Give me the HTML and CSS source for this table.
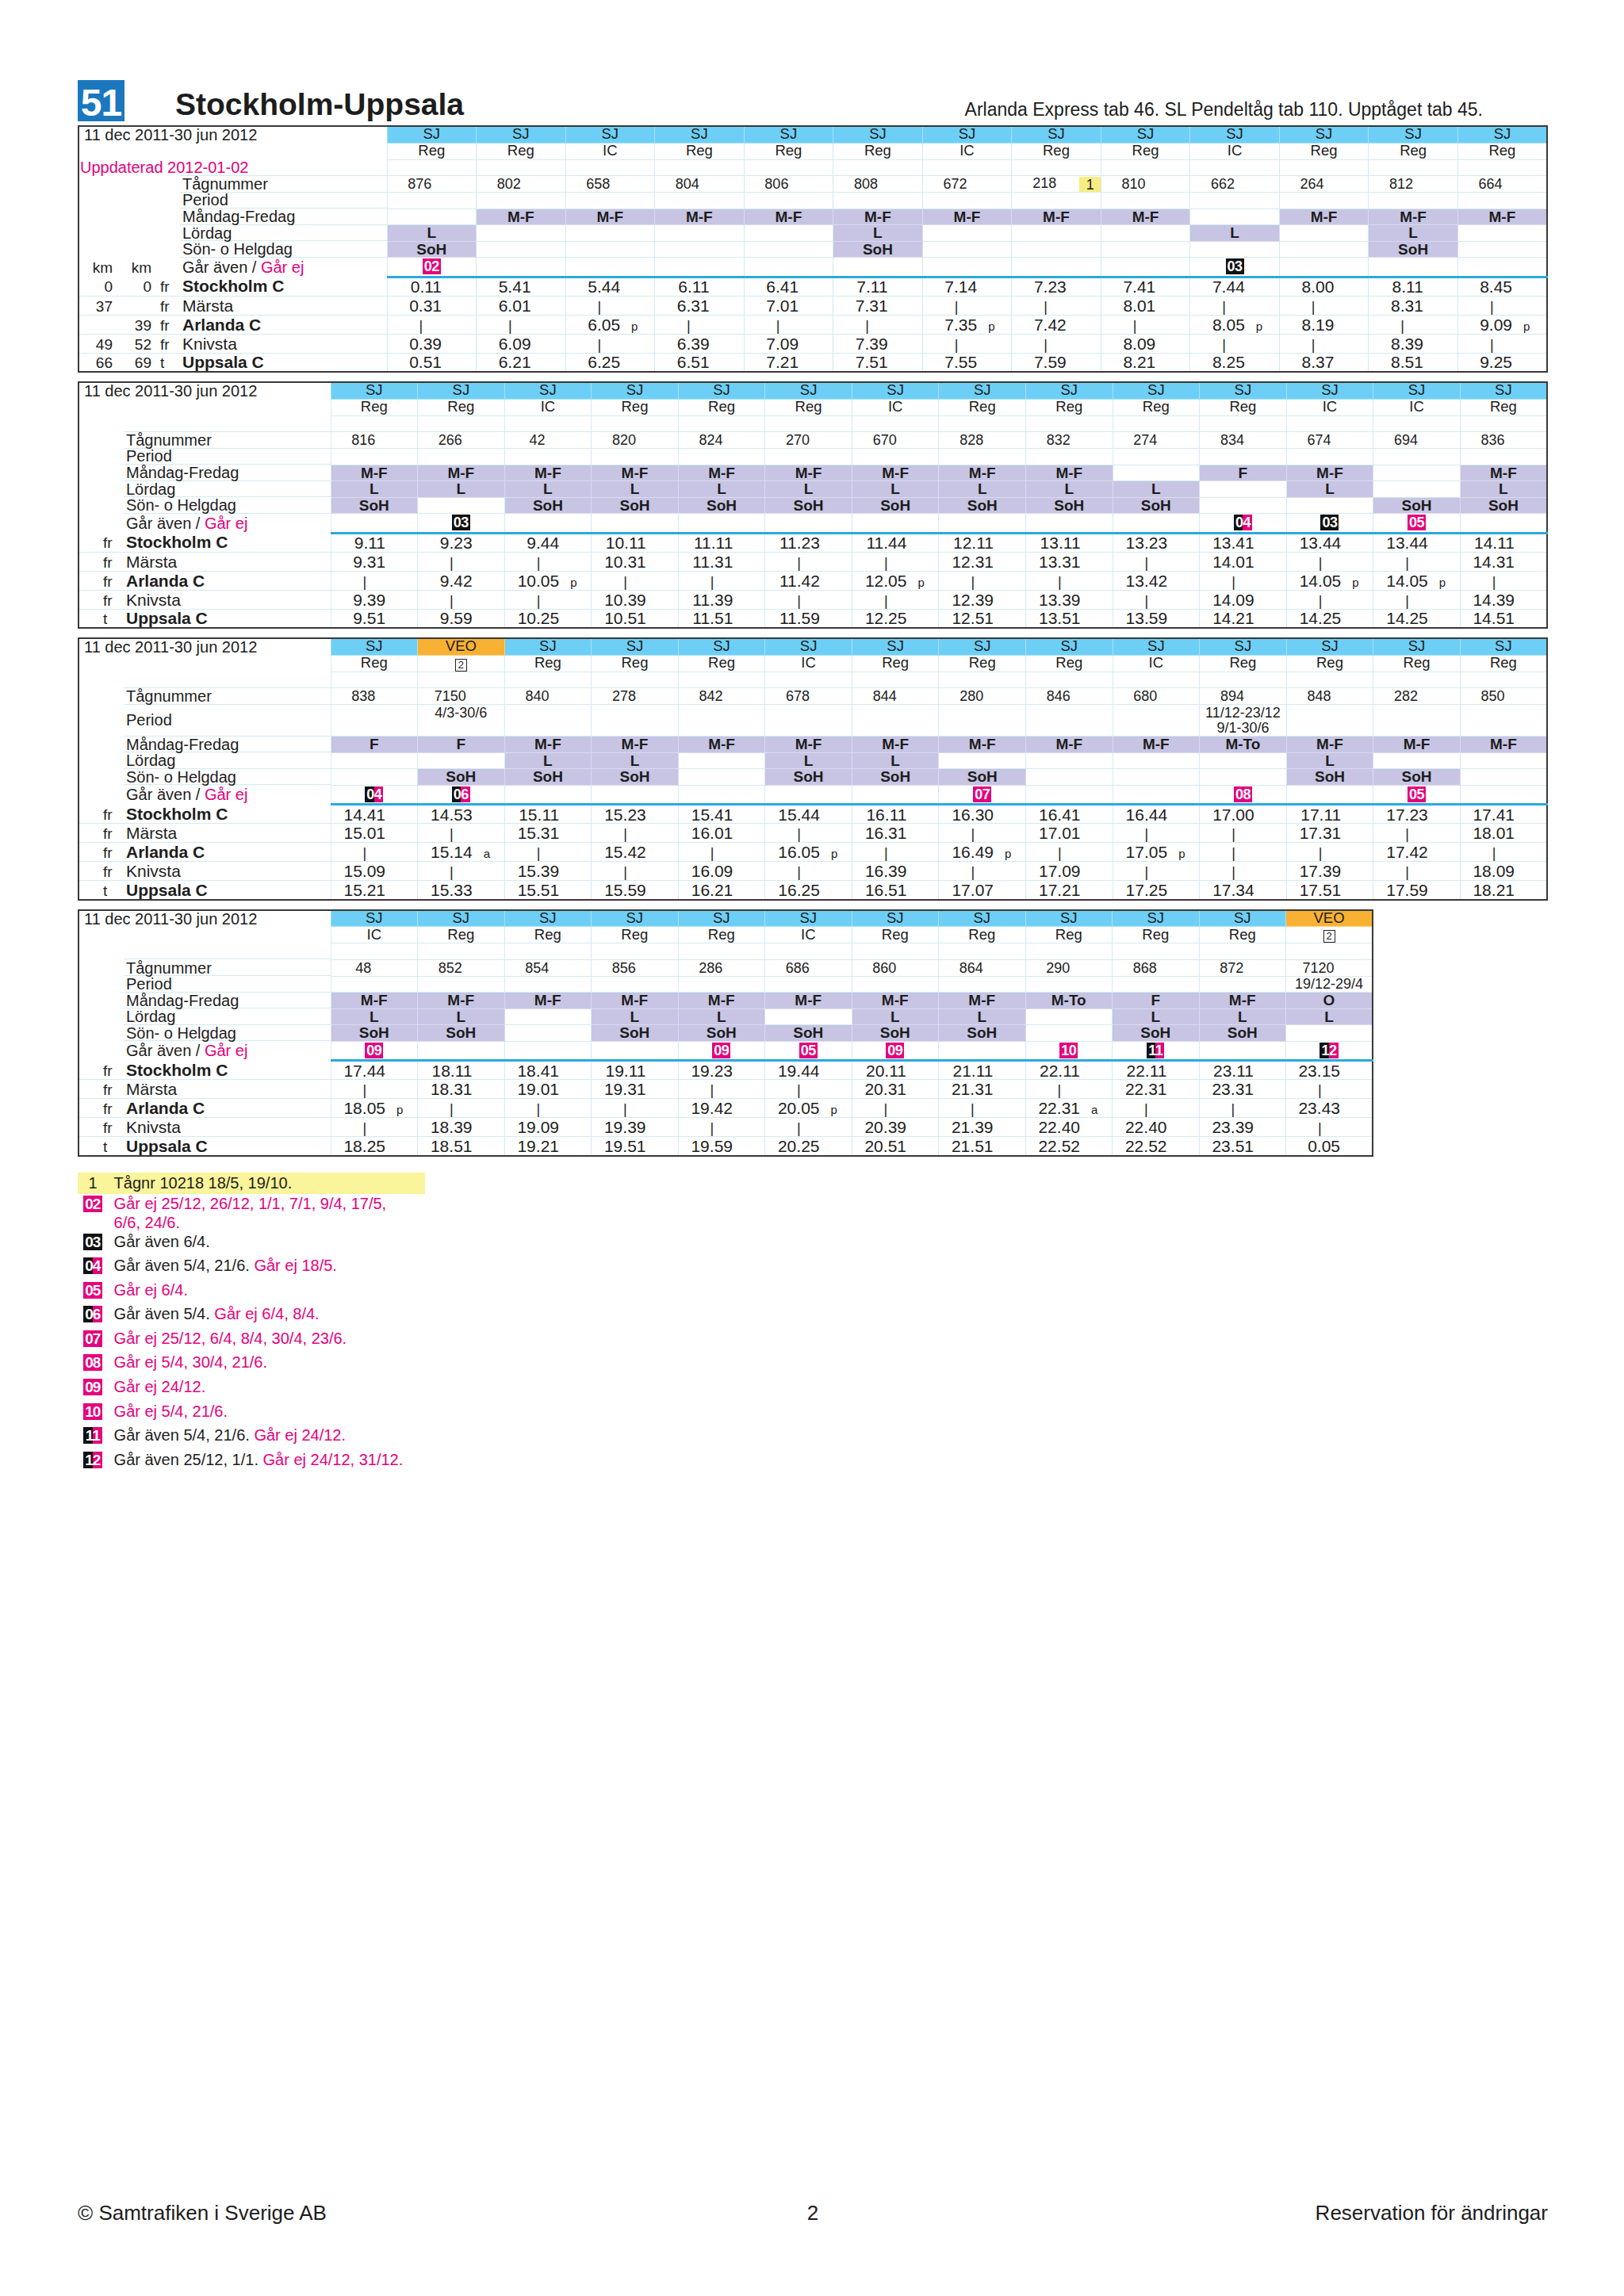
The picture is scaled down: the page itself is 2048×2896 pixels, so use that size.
FILE: index.html
```html
<!DOCTYPE html>
<html lang="sv">
<head>
<meta charset="utf-8">
<title>51 Stockholm-Uppsala</title>
<link rel="stylesheet" href="styles.css">
</head>
<body>
<div class="page">
<div class="hdr"><div class="no51">51</div><h1 class="title">Stockholm-Uppsala</h1><div class="xref">Arlanda Express tab 46. SL Pendeltåg tab 110. Upptåget tab 45.</div></div>

<table class="tt t13">
<colgroup><col class="cl"><col span="13"></colgroup>
<tr class="r-op"><td class="lab h0">11 dec 2011-30 jun 2012</td><td>SJ</td><td>SJ</td><td>SJ</td><td>SJ</td><td>SJ</td><td>SJ</td><td>SJ</td><td>SJ</td><td>SJ</td><td>SJ</td><td>SJ</td><td>SJ</td><td>SJ</td></tr>
<tr class="r-ty"><td class="lab"></td><td>Reg</td><td>Reg</td><td>IC</td><td>Reg</td><td>Reg</td><td>Reg</td><td>IC</td><td>Reg</td><td>Reg</td><td>IC</td><td>Reg</td><td>Reg</td><td>Reg</td></tr>
<tr class="r-bl"><td class="lab ln upd">Uppdaterad 2012-01-02</td><td></td><td></td><td></td><td></td><td></td><td></td><td></td><td></td><td></td><td></td><td></td><td></td><td></td></tr>
<tr class="r-nu"><td class="lab h ln">Tågnummer</td><td>876</td><td>802</td><td>658</td><td>804</td><td>806</td><td>808</td><td>672</td><td class="fnc"><span class="nv">218</span><span class="fk">1</span></td><td>810</td><td>662</td><td>264</td><td>812</td><td>664</td></tr>
<tr class="r-pe"><td class="lab h ln">Period</td><td></td><td></td><td></td><td></td><td></td><td></td><td></td><td></td><td></td><td></td><td></td><td></td><td></td></tr>
<tr class="r-mf"><td class="lab h ln">Måndag-Fredag</td><td></td><td class="on">M-F</td><td class="on">M-F</td><td class="on">M-F</td><td class="on">M-F</td><td class="on">M-F</td><td class="on">M-F</td><td class="on">M-F</td><td class="on">M-F</td><td></td><td class="on">M-F</td><td class="on">M-F</td><td class="on">M-F</td></tr>
<tr class="r-l"><td class="lab h ln">Lördag</td><td class="on">L</td><td></td><td></td><td></td><td></td><td class="on">L</td><td></td><td></td><td></td><td class="on">L</td><td></td><td class="on">L</td><td></td></tr>
<tr class="r-so"><td class="lab h ln">Sön- o Helgdag</td><td class="on">SoH</td><td></td><td></td><td></td><td></td><td class="on">SoH</td><td></td><td></td><td></td><td></td><td></td><td class="on">SoH</td><td></td></tr>
<tr class="r-no"><td class="lab"><span class="k1">km</span><span class="k2">km</span><span class="dir"></span>Går även / <span class="mg">Går ej</span></td><td><span class="b m">02</span></td><td></td><td></td><td></td><td></td><td></td><td></td><td></td><td></td><td><span class="b k">03</span></td><td></td><td></td><td></td></tr>
<tr class="r-ti"><td class="lab"><span class="k1">0</span><span class="k2">0</span><span class="dir">fr</span><b class="st">Stockholm C</b></td><td>0.11</td><td>5.41</td><td>5.44</td><td>6.11</td><td>6.41</td><td>7.11</td><td>7.14</td><td>7.23</td><td>7.41</td><td>7.44</td><td>8.00</td><td>8.11</td><td>8.45</td></tr>
<tr class="r-ti"><td class="lab"><span class="k1">37</span><span class="k2"></span><span class="dir">fr</span><span class="st">Märsta</span></td><td>0.31</td><td>6.01</td><td class="v">|</td><td>6.31</td><td>7.01</td><td>7.31</td><td class="v">|</td><td class="v">|</td><td>8.01</td><td class="v">|</td><td class="v">|</td><td>8.31</td><td class="v">|</td></tr>
<tr class="r-ti"><td class="lab"><span class="k1"></span><span class="k2">39</span><span class="dir">fr</span><b class="st">Arlanda C</b></td><td class="v">|</td><td class="v">|</td><td>6.05<span class="sx">p</span></td><td class="v">|</td><td class="v">|</td><td class="v">|</td><td>7.35<span class="sx">p</span></td><td>7.42</td><td class="v">|</td><td>8.05<span class="sx">p</span></td><td>8.19</td><td class="v">|</td><td>9.09<span class="sx">p</span></td></tr>
<tr class="r-ti"><td class="lab"><span class="k1">49</span><span class="k2">52</span><span class="dir">fr</span><span class="st">Knivsta</span></td><td>0.39</td><td>6.09</td><td class="v">|</td><td>6.39</td><td>7.09</td><td>7.39</td><td class="v">|</td><td class="v">|</td><td>8.09</td><td class="v">|</td><td class="v">|</td><td>8.39</td><td class="v">|</td></tr>
<tr class="r-ti"><td class="lab"><span class="k1">66</span><span class="k2">69</span><span class="dir">t</span><b class="st">Uppsala C</b></td><td>0.51</td><td>6.21</td><td>6.25</td><td>6.51</td><td>7.21</td><td>7.51</td><td>7.55</td><td>7.59</td><td>8.21</td><td>8.25</td><td>8.37</td><td>8.51</td><td>9.25</td></tr>
</table>

<table class="tt t14">
<colgroup><col class="cl"><col span="14"></colgroup>
<tr class="r-op"><td class="lab h0">11 dec 2011-30 jun 2012</td><td>SJ</td><td>SJ</td><td>SJ</td><td>SJ</td><td>SJ</td><td>SJ</td><td>SJ</td><td>SJ</td><td>SJ</td><td>SJ</td><td>SJ</td><td>SJ</td><td>SJ</td><td>SJ</td></tr>
<tr class="r-ty"><td class="lab"></td><td>Reg</td><td>Reg</td><td>IC</td><td>Reg</td><td>Reg</td><td>Reg</td><td>IC</td><td>Reg</td><td>Reg</td><td>Reg</td><td>Reg</td><td>IC</td><td>IC</td><td>Reg</td></tr>
<tr class="r-bl"><td class="lab ln"></td><td></td><td></td><td></td><td></td><td></td><td></td><td></td><td></td><td></td><td></td><td></td><td></td><td></td><td></td></tr>
<tr class="r-nu"><td class="lab h ln">Tågnummer</td><td>816</td><td>266</td><td>42</td><td>820</td><td>824</td><td>270</td><td>670</td><td>828</td><td>832</td><td>274</td><td>834</td><td>674</td><td>694</td><td>836</td></tr>
<tr class="r-pe"><td class="lab h ln">Period</td><td></td><td></td><td></td><td></td><td></td><td></td><td></td><td></td><td></td><td></td><td></td><td></td><td></td><td></td></tr>
<tr class="r-mf"><td class="lab h ln">Måndag-Fredag</td><td class="on">M-F</td><td class="on">M-F</td><td class="on">M-F</td><td class="on">M-F</td><td class="on">M-F</td><td class="on">M-F</td><td class="on">M-F</td><td class="on">M-F</td><td class="on">M-F</td><td></td><td class="on">F</td><td class="on">M-F</td><td></td><td class="on">M-F</td></tr>
<tr class="r-l"><td class="lab h ln">Lördag</td><td class="on">L</td><td class="on">L</td><td class="on">L</td><td class="on">L</td><td class="on">L</td><td class="on">L</td><td class="on">L</td><td class="on">L</td><td class="on">L</td><td class="on">L</td><td></td><td class="on">L</td><td></td><td class="on">L</td></tr>
<tr class="r-so"><td class="lab h ln">Sön- o Helgdag</td><td class="on">SoH</td><td></td><td class="on">SoH</td><td class="on">SoH</td><td class="on">SoH</td><td class="on">SoH</td><td class="on">SoH</td><td class="on">SoH</td><td class="on">SoH</td><td class="on">SoH</td><td></td><td></td><td class="on">SoH</td><td class="on">SoH</td></tr>
<tr class="r-no"><td class="lab h">Går även / <span class="mg">Går ej</span></td><td></td><td><span class="b k">03</span></td><td></td><td></td><td></td><td></td><td></td><td></td><td></td><td></td><td><span class="b s">04</span></td><td><span class="b k">03</span></td><td><span class="b m">05</span></td><td></td></tr>
<tr class="r-ti"><td class="lab"><span class="dir">fr</span><b class="st">Stockholm C</b></td><td>9.11</td><td>9.23</td><td>9.44</td><td>10.11</td><td>11.11</td><td>11.23</td><td>11.44</td><td>12.11</td><td>13.11</td><td>13.23</td><td>13.41</td><td>13.44</td><td>13.44</td><td>14.11</td></tr>
<tr class="r-ti"><td class="lab"><span class="dir">fr</span><span class="st">Märsta</span></td><td>9.31</td><td class="v">|</td><td class="v">|</td><td>10.31</td><td>11.31</td><td class="v">|</td><td class="v">|</td><td>12.31</td><td>13.31</td><td class="v">|</td><td>14.01</td><td class="v">|</td><td class="v">|</td><td>14.31</td></tr>
<tr class="r-ti"><td class="lab"><span class="dir">fr</span><b class="st">Arlanda C</b></td><td class="v">|</td><td>9.42</td><td>10.05<span class="sx">p</span></td><td class="v">|</td><td class="v">|</td><td>11.42</td><td>12.05<span class="sx">p</span></td><td class="v">|</td><td class="v">|</td><td>13.42</td><td class="v">|</td><td>14.05<span class="sx">p</span></td><td>14.05<span class="sx">p</span></td><td class="v">|</td></tr>
<tr class="r-ti"><td class="lab"><span class="dir">fr</span><span class="st">Knivsta</span></td><td>9.39</td><td class="v">|</td><td class="v">|</td><td>10.39</td><td>11.39</td><td class="v">|</td><td class="v">|</td><td>12.39</td><td>13.39</td><td class="v">|</td><td>14.09</td><td class="v">|</td><td class="v">|</td><td>14.39</td></tr>
<tr class="r-ti"><td class="lab"><span class="dir">t</span><b class="st">Uppsala C</b></td><td>9.51</td><td>9.59</td><td>10.25</td><td>10.51</td><td>11.51</td><td>11.59</td><td>12.25</td><td>12.51</td><td>13.51</td><td>13.59</td><td>14.21</td><td>14.25</td><td>14.25</td><td>14.51</td></tr>
</table>

<table class="tt t14">
<colgroup><col class="cl"><col span="14"></colgroup>
<tr class="r-op"><td class="lab h0">11 dec 2011-30 jun 2012</td><td>SJ</td><td class="veo">VEO</td><td>SJ</td><td>SJ</td><td>SJ</td><td>SJ</td><td>SJ</td><td>SJ</td><td>SJ</td><td>SJ</td><td>SJ</td><td>SJ</td><td>SJ</td><td>SJ</td></tr>
<tr class="r-ty"><td class="lab"></td><td>Reg</td><td><span class="box2">2</span></td><td>Reg</td><td>Reg</td><td>Reg</td><td>IC</td><td>Reg</td><td>Reg</td><td>Reg</td><td>IC</td><td>Reg</td><td>Reg</td><td>Reg</td><td>Reg</td></tr>
<tr class="r-bl"><td class="lab ln"></td><td></td><td></td><td></td><td></td><td></td><td></td><td></td><td></td><td></td><td></td><td></td><td></td><td></td><td></td></tr>
<tr class="r-nu"><td class="lab h ln">Tågnummer</td><td>838</td><td>7150</td><td>840</td><td>278</td><td>842</td><td>678</td><td>844</td><td>280</td><td>846</td><td>680</td><td>894</td><td>848</td><td>282</td><td>850</td></tr>
<tr class="r-pe tall"><td class="lab h ln">Period</td><td></td><td>4/3-30/6</td><td></td><td></td><td></td><td></td><td></td><td></td><td></td><td></td><td>11/12-23/12<br>9/1-30/6</td><td></td><td></td><td></td></tr>
<tr class="r-mf"><td class="lab h ln">Måndag-Fredag</td><td class="on">F</td><td class="on">F</td><td class="on">M-F</td><td class="on">M-F</td><td class="on">M-F</td><td class="on">M-F</td><td class="on">M-F</td><td class="on">M-F</td><td class="on">M-F</td><td class="on">M-F</td><td class="on">M-To</td><td class="on">M-F</td><td class="on">M-F</td><td class="on">M-F</td></tr>
<tr class="r-l"><td class="lab h ln">Lördag</td><td></td><td></td><td class="on">L</td><td class="on">L</td><td></td><td class="on">L</td><td class="on">L</td><td></td><td></td><td></td><td></td><td class="on">L</td><td></td><td></td></tr>
<tr class="r-so"><td class="lab h ln">Sön- o Helgdag</td><td></td><td class="on">SoH</td><td class="on">SoH</td><td class="on">SoH</td><td></td><td class="on">SoH</td><td class="on">SoH</td><td class="on">SoH</td><td></td><td></td><td></td><td class="on">SoH</td><td class="on">SoH</td><td></td></tr>
<tr class="r-no"><td class="lab h">Går även / <span class="mg">Går ej</span></td><td><span class="b s">04</span></td><td><span class="b s">06</span></td><td></td><td></td><td></td><td></td><td></td><td><span class="b m">07</span></td><td></td><td></td><td><span class="b m">08</span></td><td></td><td><span class="b m">05</span></td><td></td></tr>
<tr class="r-ti"><td class="lab"><span class="dir">fr</span><b class="st">Stockholm C</b></td><td>14.41</td><td>14.53</td><td>15.11</td><td>15.23</td><td>15.41</td><td>15.44</td><td>16.11</td><td>16.30</td><td>16.41</td><td>16.44</td><td>17.00</td><td>17.11</td><td>17.23</td><td>17.41</td></tr>
<tr class="r-ti"><td class="lab"><span class="dir">fr</span><span class="st">Märsta</span></td><td>15.01</td><td class="v">|</td><td>15.31</td><td class="v">|</td><td>16.01</td><td class="v">|</td><td>16.31</td><td class="v">|</td><td>17.01</td><td class="v">|</td><td class="v">|</td><td>17.31</td><td class="v">|</td><td>18.01</td></tr>
<tr class="r-ti"><td class="lab"><span class="dir">fr</span><b class="st">Arlanda C</b></td><td class="v">|</td><td>15.14<span class="sx">a</span></td><td class="v">|</td><td>15.42</td><td class="v">|</td><td>16.05<span class="sx">p</span></td><td class="v">|</td><td>16.49<span class="sx">p</span></td><td class="v">|</td><td>17.05<span class="sx">p</span></td><td class="v">|</td><td class="v">|</td><td>17.42</td><td class="v">|</td></tr>
<tr class="r-ti"><td class="lab"><span class="dir">fr</span><span class="st">Knivsta</span></td><td>15.09</td><td class="v">|</td><td>15.39</td><td class="v">|</td><td>16.09</td><td class="v">|</td><td>16.39</td><td class="v">|</td><td>17.09</td><td class="v">|</td><td class="v">|</td><td>17.39</td><td class="v">|</td><td>18.09</td></tr>
<tr class="r-ti"><td class="lab"><span class="dir">t</span><b class="st">Uppsala C</b></td><td>15.21</td><td>15.33</td><td>15.51</td><td>15.59</td><td>16.21</td><td>16.25</td><td>16.51</td><td>17.07</td><td>17.21</td><td>17.25</td><td>17.34</td><td>17.51</td><td>17.59</td><td>18.21</td></tr>
</table>

<table class="tt t14 w12">
<colgroup><col class="cl"><col span="12"></colgroup>
<tr class="r-op"><td class="lab h0">11 dec 2011-30 jun 2012</td><td>SJ</td><td>SJ</td><td>SJ</td><td>SJ</td><td>SJ</td><td>SJ</td><td>SJ</td><td>SJ</td><td>SJ</td><td>SJ</td><td>SJ</td><td class="veo">VEO</td></tr>
<tr class="r-ty"><td class="lab"></td><td>IC</td><td>Reg</td><td>Reg</td><td>Reg</td><td>Reg</td><td>IC</td><td>Reg</td><td>Reg</td><td>Reg</td><td>Reg</td><td>Reg</td><td><span class="box2">2</span></td></tr>
<tr class="r-bl"><td class="lab ln"></td><td></td><td></td><td></td><td></td><td></td><td></td><td></td><td></td><td></td><td></td><td></td><td></td></tr>
<tr class="r-nu"><td class="lab h ln">Tågnummer</td><td>48</td><td>852</td><td>854</td><td>856</td><td>286</td><td>686</td><td>860</td><td>864</td><td>290</td><td>868</td><td>872</td><td>7120</td></tr>
<tr class="r-pe"><td class="lab h ln">Period</td><td></td><td></td><td></td><td></td><td></td><td></td><td></td><td></td><td></td><td></td><td></td><td>19/12-29/4</td></tr>
<tr class="r-mf"><td class="lab h ln">Måndag-Fredag</td><td class="on">M-F</td><td class="on">M-F</td><td class="on">M-F</td><td class="on">M-F</td><td class="on">M-F</td><td class="on">M-F</td><td class="on">M-F</td><td class="on">M-F</td><td class="on">M-To</td><td class="on">F</td><td class="on">M-F</td><td class="on">O</td></tr>
<tr class="r-l"><td class="lab h ln">Lördag</td><td class="on">L</td><td class="on">L</td><td></td><td class="on">L</td><td class="on">L</td><td></td><td class="on">L</td><td class="on">L</td><td></td><td class="on">L</td><td class="on">L</td><td class="on">L</td></tr>
<tr class="r-so"><td class="lab h ln">Sön- o Helgdag</td><td class="on">SoH</td><td class="on">SoH</td><td></td><td class="on">SoH</td><td class="on">SoH</td><td class="on">SoH</td><td class="on">SoH</td><td class="on">SoH</td><td></td><td class="on">SoH</td><td class="on">SoH</td><td></td></tr>
<tr class="r-no"><td class="lab h">Går även / <span class="mg">Går ej</span></td><td><span class="b m">09</span></td><td></td><td></td><td></td><td><span class="b m">09</span></td><td><span class="b m">05</span></td><td><span class="b m">09</span></td><td></td><td><span class="b m">10</span></td><td><span class="b s">11</span></td><td></td><td><span class="b s">12</span></td></tr>
<tr class="r-ti"><td class="lab"><span class="dir">fr</span><b class="st">Stockholm C</b></td><td>17.44</td><td>18.11</td><td>18.41</td><td>19.11</td><td>19.23</td><td>19.44</td><td>20.11</td><td>21.11</td><td>22.11</td><td>22.11</td><td>23.11</td><td>23.15</td></tr>
<tr class="r-ti"><td class="lab"><span class="dir">fr</span><span class="st">Märsta</span></td><td class="v">|</td><td>18.31</td><td>19.01</td><td>19.31</td><td class="v">|</td><td class="v">|</td><td>20.31</td><td>21.31</td><td class="v">|</td><td>22.31</td><td>23.31</td><td class="v">|</td></tr>
<tr class="r-ti"><td class="lab"><span class="dir">fr</span><b class="st">Arlanda C</b></td><td>18.05<span class="sx">p</span></td><td class="v">|</td><td class="v">|</td><td class="v">|</td><td>19.42</td><td>20.05<span class="sx">p</span></td><td class="v">|</td><td class="v">|</td><td>22.31<span class="sx">a</span></td><td class="v">|</td><td class="v">|</td><td>23.43</td></tr>
<tr class="r-ti"><td class="lab"><span class="dir">fr</span><span class="st">Knivsta</span></td><td class="v">|</td><td>18.39</td><td>19.09</td><td>19.39</td><td class="v">|</td><td class="v">|</td><td>20.39</td><td>21.39</td><td>22.40</td><td>22.40</td><td>23.39</td><td class="v">|</td></tr>
<tr class="r-ti"><td class="lab"><span class="dir">t</span><b class="st">Uppsala C</b></td><td>18.25</td><td>18.51</td><td>19.21</td><td>19.51</td><td>19.59</td><td>20.25</td><td>20.51</td><td>21.51</td><td>22.52</td><td>22.52</td><td>23.51</td><td>0.05</td></tr>
</table>

<div class="fns">
<div class="fn y"><span class="yk">1</span><span class="ft">Tågnr 10218 18/5, 19/10.</span></div>
<div class="fn w"><span class="b m">02</span><span class="ft mg">Går ej 25/12, 26/12, 1/1, 7/1, 9/4, 17/5, 6/6, 24/6.</span></div>
<div class="fn"><span class="b k">03</span><span class="ft">Går även 6/4.</span></div>
<div class="fn"><span class="b s">04</span><span class="ft">Går även 5/4, 21/6. <span class="mg">Går ej 18/5.</span></span></div>
<div class="fn"><span class="b m">05</span><span class="ft mg">Går ej 6/4.</span></div>
<div class="fn"><span class="b s">06</span><span class="ft">Går även 5/4. <span class="mg">Går ej 6/4, 8/4.</span></span></div>
<div class="fn"><span class="b m">07</span><span class="ft mg">Går ej 25/12, 6/4, 8/4, 30/4, 23/6.</span></div>
<div class="fn"><span class="b m">08</span><span class="ft mg">Går ej 5/4, 30/4, 21/6.</span></div>
<div class="fn"><span class="b m">09</span><span class="ft mg">Går ej 24/12.</span></div>
<div class="fn"><span class="b m">10</span><span class="ft mg">Går ej 5/4, 21/6.</span></div>
<div class="fn"><span class="b s">11</span><span class="ft">Går även 5/4, 21/6. <span class="mg">Går ej 24/12.</span></span></div>
<div class="fn"><span class="b s">12</span><span class="ft">Går även 25/12, 1/1. <span class="mg">Går ej 24/12, 31/12.</span></span></div>
</div>

<div class="foot"><span>© Samtrafiken i Sverige AB</span><span class="fc">2</span><span class="fr">Reservation för ändringar</span></div>
</div>
</body>
</html>
```

FILE: styles.css
```css
*{box-sizing:border-box}
html,body{margin:0;padding:0;background:#fff}
body{font-family:"Liberation Sans",Arial,sans-serif;color:#1d1d1d}
.page{width:2048px;min-height:2896px;padding:101px 96px 90px 98px;display:flex;flex-direction:column;align-items:flex-start}

.hdr{display:flex;align-items:flex-end;width:1854px;height:52px}
.no51{width:59px;height:52px;background:#1b77be;color:#fff;font-weight:700;font-size:48px;line-height:58px;text-align:center;letter-spacing:-1px}
.title{margin:0 0 2px 64px;font-size:39px;line-height:39px;font-weight:700}
.xref{margin:0 82px 3px auto;font-size:23px;line-height:23px}

.tt{border-collapse:collapse;table-layout:fixed;width:1854px;border:2px solid #383838;margin-top:11px}
.hdr+.tt{margin-top:5px}
.tt.w12{width:1634px}
.t13 .cl{width:389px}
.t14 .cl{width:318px}

.tt td{padding:0;border:1px solid #d3ebf3;text-align:center;vertical-align:middle;line-height:1;white-space:nowrap;font-size:18px}

.r-op{height:20px}
.r-ty{height:21px}
.r-bl{height:20.5px}
.r-nu{height:21px}
.r-pe{height:20.5px}
.r-pe.tall{height:36px}
.r-mf,.r-l,.r-so{height:20.5px}
.r-no{height:24.5px}
.r-ti{height:24px}

.r-op td{background:#6dcff6;border-color:#a6e0f7;font-size:18.5px;vertical-align:bottom;padding-bottom:1px}
.r-op td.veo{background:#f8b133;border-color:#fbd07a}
.r-ty td{font-size:18.5px}
.box2{display:inline-block;width:15px;height:16px;border:1.5px solid #222;font-size:13px;line-height:13px;text-align:center;vertical-align:-1px}

.r-nu td{padding-right:30px}
.t14 .r-nu td{padding-right:27px}
.r-nu td.fnc{padding:0;text-align:left}
.nv{display:inline-block;width:82px;text-align:center}
.fk{display:inline-block;width:27px;height:19px;line-height:20px;background:#f6ee80;text-align:center;margin-left:3px;vertical-align:middle}

.r-pe td{font-size:18px;line-height:19px}
.r-pe.tall td{vertical-align:top;padding-top:1px}

.r-mf td,.r-l td,.r-so td{font-size:19px;font-weight:700}
.tt td.on{background:#c7c5e3;border-color:#dcdaf0}

.r-no td{border-bottom:3px solid #2aa9e0}
.b{display:inline-block;height:20px;line-height:21px;padding:0 2px;font-weight:700;font-size:18px;color:#fff;letter-spacing:-.5px;vertical-align:middle}
.b.m{background:#e5007e}
.b.k{background:#111}
.b.s{background:linear-gradient(90deg,#111 50%,#e5007e 50%)}

.r-ti td{font-size:21px;text-align:right;padding-right:43px}
.t14 .r-ti td{padding-right:40px}
.tt .r-ti td.v{text-align:left;padding:0 0 0 40px;font-size:18px;vertical-align:bottom;line-height:20px}
.sx{display:inline-block;width:0;text-indent:14px;font-size:15px}

.tt td.lab{border-top:0;border-bottom:0;text-align:left;font-size:20px;font-weight:400;background:#fff;padding:0;vertical-align:middle}
.tt td.lab.h0{padding-left:6px;vertical-align:middle}
.t13 td.lab.h{padding-left:130px}
.t14 td.lab.h{padding-left:59px}
.tt td.upd{color:#e5007e;padding-left:1px}
.mg{color:#e5007e}
.t13 td.lab.ln{background:#fff linear-gradient(#d3ebf3,#d3ebf3) right bottom/calc(100% - 127px) 1px no-repeat}
.t14 td.lab.ln{background:#fff linear-gradient(#d3ebf3,#d3ebf3) right bottom/calc(100% - 56px) 1px no-repeat}
.tt .r-ti td.lab{border-bottom:1px solid #d3ebf3;font-size:21px}
.tt .r-pe.tall td.lab{vertical-align:middle}

.k1,.k2,.dir{display:inline-block;font-size:19px}
.k1{width:42px;text-align:right}
.k2{width:49px;text-align:right}
.t13 .dir{width:28px;margin-left:11px}
.t14 .dir{width:29px;margin-left:30px}
.st{font-size:21px}

.fns{margin-top:20px;width:438px;font-size:20px}
.fn{display:flex;align-items:flex-start;line-height:30.6px;min-height:30.6px}
.fn.y{background:#faf49a;height:27px;line-height:27px;min-height:0}
.yk{width:38px;margin-right:7.6px;text-align:center}
.fn .b{flex:none;width:24.5px;height:21px;line-height:22px;font-size:19px;padding:0;text-align:center;margin:5px 14.6px 0 6.5px;letter-spacing:-1px}
.ft{max-width:374px}
.fn.w{line-height:24.5px;margin-bottom:-4px}
.fn.w .b{margin-top:2px}

.foot{margin-top:auto;display:grid;grid-template-columns:1fr auto 1fr;width:1854px;font-size:26px;line-height:30px}
.fc{text-align:center}
.fr{text-align:right}
```
